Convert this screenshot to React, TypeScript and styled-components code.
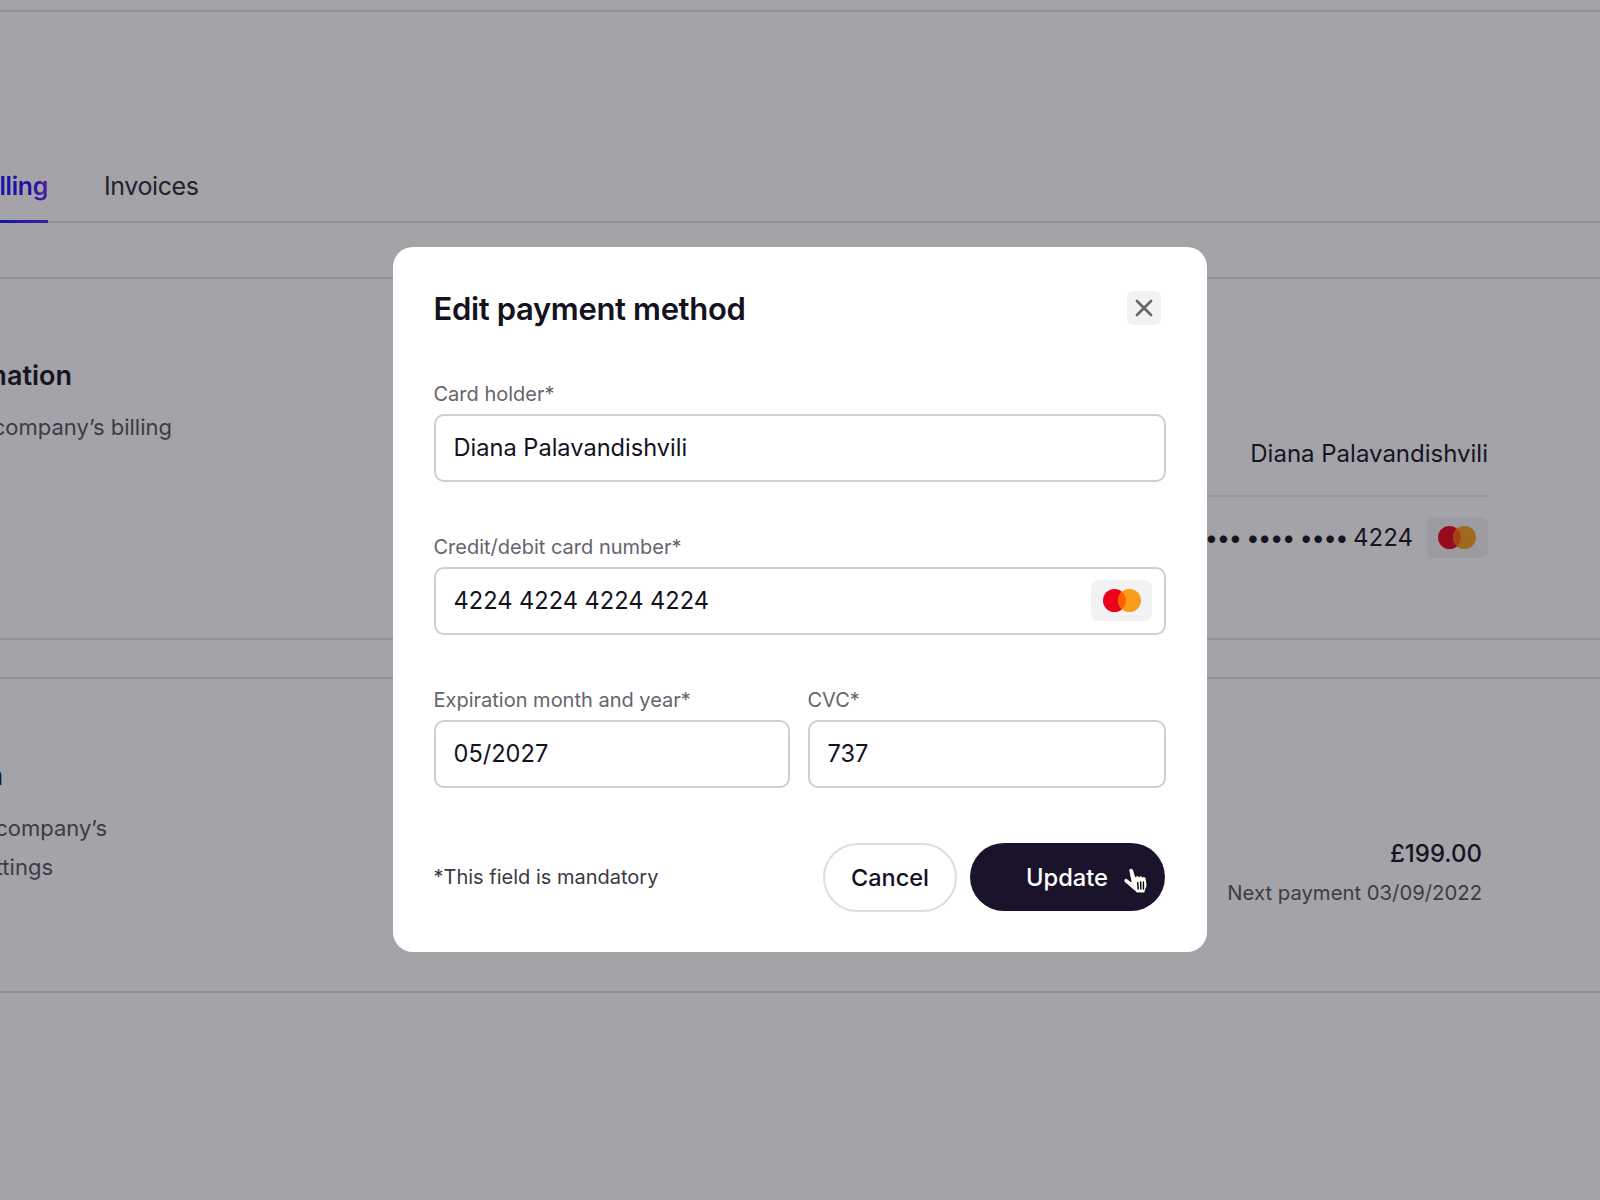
import styled, { createGlobalStyle } from "styled-components";

const GlobalStyle = createGlobalStyle`
  html, body {
    margin: 0;
    padding: 0;
  }

  body {
    font-family: Inter, "Liberation Sans", sans-serif;
    color: #14121f;
  }

  * {
    box-sizing: border-box;
  }
`;

const MastercardMark = () => (
  <svg width="38" height="23" viewBox="0 0 38 23" aria-hidden="true">
    <circle cx="11.5" cy="11.5" r="11.5" fill="#eb001b" />
    <circle cx="26.5" cy="11.5" r="11.5" fill="#f79e1b" />
    <path d="M19 2.8a11.5 11.5 0 0 1 0 17.4a11.5 11.5 0 0 1 0-17.4z" fill="#ff5f00" />
  </svg>
);

const HandCursor = () => (
  <svg width="25" height="27" viewBox="-1 0 25 27" aria-hidden="true">
    <path
      d="M4.8 3.2C4.700 1.200 8.800.8 9.400 3l2.200 7c.4-1.600 2.800-2 3.500-.1.6-1.400 2.800-1.500 3.400.3.900-1 3-.6 3.500 1.200l.9 5.600c.2 1.600-.2 3-1 4.400l-1 3.600c-.2.6-.6.9-1.200.9h-6.300c-.6 0-1-.3-1.300-.8L6.200 20 .6 15.200c-1.800-1.900.4-4.600 2.700-3.200l3.800 2.800z"
      fill="#fff"
      stroke="#000"
      strokeWidth="0.8"
      strokeLinejoin="round"
    />
    <path d="M13.700 15.500l.5 6.500M16.600 15l.3 7M19.400 15l.1 7" stroke="#000" strokeWidth="1.400" strokeLinecap="round" />
  </svg>
);

const CloseIcon = () => (
  <svg width="18" height="18" viewBox="0 0 18 18" aria-hidden="true">
    <path d="M2 2l14 14M16 2L2 16" stroke="#67666c" strokeWidth="2.800" strokeLinecap="round" />
  </svg>
);

export default function App() {
  return (
    <Page>
      <GlobalStyle />
      <TopRule />
      <TabBar>
        <ActiveTab $end={48}>
          <TabGradient>Billing</TabGradient>
        </ActiveTab>
        <Tab>Invoices</Tab>
      </TabBar>

      <Section>
        <SectionIntro>
          <IntroTitle $end={72}>Billing information</IntroTitle>
          <IntroLine $end={172}>Update your company’s billing</IntroLine>
        </SectionIntro>
        <DetailColumn>
          <NameRow>Diana Palavandishvili</NameRow>
          <CardRow>
            <CardDigits>
              <CardDots>•••• •••• •••• </CardDots>4224
            </CardDigits>
            <CardBadge>
              <MastercardMark />
            </CardBadge>
          </CardRow>
        </DetailColumn>
      </Section>

      <PlanSection>
        <PlanIntro>
          <IntroTitle $end={3}>Subscription</IntroTitle>
          <IntroLine $end={107}>Manage your company’s</IntroLine>
          <IntroLine $end={53}>settings</IntroLine>
        </PlanIntro>
        <PlanColumn>
          <Price>£199.00</Price>
          <NextPayment>Next payment 03/09/2022</NextPayment>
        </PlanColumn>
      </PlanSection>

      <Scrim>
        <Modal>
          <ModalHeader>
            <ModalTitle>Edit payment method</ModalTitle>
            <CloseButton type="button" aria-label="Close">
              <CloseIcon />
            </CloseButton>
          </ModalHeader>

          <Field>
            <FieldLabel>Card holder*</FieldLabel>
            <InputBox>
              <InputText readOnly value="Diana Palavandishvili" />
            </InputBox>
          </Field>

          <Field>
            <FieldLabel>Credit/debit card number*</FieldLabel>
            <InputBox>
              <InputText readOnly value="4224 4224 4224 4224" />
              <InputBadge>
                <MastercardMark />
              </InputBadge>
            </InputBox>
          </Field>

          <FieldPair>
            <Field>
              <FieldLabel>Expiration month and year*</FieldLabel>
              <InputBox>
                <InputText readOnly value="05/2027" />
              </InputBox>
            </Field>
            <Field>
              <FieldLabel>CVC*</FieldLabel>
              <InputBox>
                <InputText readOnly value="737" />
              </InputBox>
            </Field>
          </FieldPair>

          <ModalFooter>
            <Hint>*This field is mandatory</Hint>
            <CancelButton type="button">Cancel</CancelButton>
            <UpdateButton type="button">
              Update
              <CursorSlot>
                <HandCursor />
              </CursorSlot>
            </UpdateButton>
          </ModalFooter>
        </Modal>
      </Scrim>
    </Page>
  );
}

const Page = styled.div`
  position: relative;
  width: 1600px;
  height: 1200px;
  overflow: hidden;
  background: #fff;
  padding-top: 10px;
`;

const TopRule = styled.div`
  height: 2px;
  background: #e2e2e6;
`;

const TabBar = styled.div`
  display: flex;
  gap: 56px;
  height: 211px;
  align-items: flex-end;
  border-bottom: 2px solid #e2e2e6;
`;

const Tab = styled.div`
  position: relative;
  top: 2px;
  white-space: nowrap;
  padding-bottom: 17px;
  font-size: 25px;
  line-height: 34px;
  letter-spacing: -0.4px;
  color: #2a2833;
  border-bottom: 3px solid transparent;
`;

const ActiveTab = styled(Tab)<{ $end: number }>`
  display: flex;
  justify-content: flex-end;
  width: ${(p) => p.$end}px;
  font-weight: 600;
  border-image: linear-gradient(90deg, #1a10ff, #5a22f5) 1;
`;

const TabGradient = styled.span`
  background: linear-gradient(90deg, #1a10ff 70%, #6a24f5);
  -webkit-background-clip: text;
  background-clip: text;
  color: transparent;
`;

const Section = styled.section`
  display: flex;
  justify-content: space-between;
  height: 363px;
  margin-top: 54px;
  padding-right: 112px;
  border-top: 2px solid #e2e2e6;
  border-bottom: 2px solid #e2e2e6;
`;

const PlanSection = styled(Section)`
  height: 316px;
  margin-top: 37px;
  padding-right: 118px;
`;

const SectionIntro = styled.div`
  padding-top: 80px;
`;

const IntroTitle = styled.div<{ $end: number }>`
  display: flex;
  justify-content: flex-end;
  white-space: nowrap;
  width: ${(p) => p.$end}px;
  margin-bottom: 15px;
  font-size: 27px;
  line-height: 34px;
  font-weight: 600;
  color: #14121f;
`;

const PlanIntro = styled(SectionIntro)`
  padding-top: 80px;

  ${IntroTitle} {
    margin-bottom: 16px;
  }
`;

const IntroLine = styled.div<{ $end: number }>`
  display: flex;
  justify-content: flex-end;
  white-space: nowrap;
  width: ${(p) => p.$end}px;
  font-size: 22px;
  line-height: 39px;
  color: #55535c;
`;

const DetailColumn = styled.div`
  width: 620px;
  padding-top: 157px;
`;

const NameRow = styled.div`
  height: 61px;
  text-align: right;
  font-size: 24px;
  line-height: 36px;
  color: #14121f;
  border-bottom: 2px solid #ececef;
`;

const CardRow = styled.div`
  display: flex;
  justify-content: flex-end;
  align-items: center;
  gap: 13px;
  padding-top: 20px;
`;

const CardDigits = styled.div`
  font-size: 24px;
  line-height: 41px;
  color: #14121f;
`;

const CardDots = styled.span`
  letter-spacing: -0.85px;
  font-weight: 500;
`;

const CardBadge = styled.div`
  display: flex;
  align-items: center;
  justify-content: center;
  width: 62px;
  height: 41px;
  border-radius: 7px;
  background: #f2f2f3;
`;

const PlanColumn = styled.div`
  padding-top: 157px;
  text-align: right;
`;

const Price = styled.div`
  font-size: 24px;
  line-height: 36px;
  font-weight: 500;
  color: #14121f;
`;

const NextPayment = styled.div`
  margin-top: 3px;
  font-size: 20.300px;
  line-height: 36px;
  color: #55535c;
`;

const Scrim = styled.div`
  position: absolute;
  inset: 0;
  display: flex;
  justify-content: center;
  padding-top: 247px;
  background: rgba(27, 25, 37, 0.4);
`;

const Modal = styled.div`
  width: 814px;
  height: 705px;
  padding: 40px 41px 0 40.5px;
  border-radius: 20px;
  background: #fff;
`;

const ModalHeader = styled.div`
  display: flex;
  justify-content: space-between;
  align-items: center;
  height: 44px;
  margin-bottom: 45px;
  padding-right: 5px;
`;

const ModalTitle = styled.h2`
  margin: 0;
  font-size: 31px;
  line-height: 40px;
  letter-spacing: -0.35px;
  font-weight: 600;
  color: #14121f;
`;

const CloseButton = styled.button`
  position: relative;
  top: -1px;
  display: flex;
  align-items: center;
  justify-content: center;
  width: 34px;
  height: 34px;
  padding: 0;
  border: 0;
  border-radius: 6px;
  background: #f2f2f3;
`;

const Field = styled.div`
  min-width: 0;
  margin-bottom: 47.700px;
`;

const FieldLabel = styled.div`
  height: 37.500px;
  padding-top: 4px;
  font-size: 20px;
  line-height: 28px;
  color: #66646c;
`;

const InputBox = styled.div`
  display: flex;
  align-items: center;
  height: 68px;
  padding: 0 12px 0 18px;
  border: 2px solid #cfcfd2;
  border-radius: 10px;
  background: #fff;
`;

const InputText = styled.input`
  flex: 1;
  min-width: 0;
  padding: 0;
  border: 0;
  outline: 0;
  background: transparent;
  font-family: inherit;
  font-size: 23.600px;
  line-height: 32px;
  color: #14121f;
`;

const InputBadge = styled(CardBadge)`
  width: 61px;
  border-radius: 8px;
`;

const FieldPair = styled.div`
  display: grid;
  grid-template-columns: 356px minmax(0, 1fr);
  gap: 18px;
`;

const ModalFooter = styled.div`
  display: flex;
  align-items: center;
  margin-top: 7px;
`;

const Hint = styled.div`
  flex: 1;
  font-size: 20px;
  line-height: 28px;
  color: #3a3944;
`;

const CancelButton = styled.button`
  width: 134px;
  height: 69px;
  margin-right: 13px;
  padding: 0;
  border: 2px solid #dedee0;
  border-radius: 35px;
  background: #fff;
  font-family: inherit;
  font-size: 23.500px;
  font-weight: 500;
  color: #14121f;
`;

const UpdateButton = styled.button`
  position: relative;
  width: 195px;
  height: 68px;
  margin-right: 1px;
  padding: 0 0 0 56px;
  border: 0;
  border-radius: 34px;
  background: #1a132b;
  font-family: inherit;
  font-size: 23.700px;
  font-weight: 500;
  text-align: left;
  color: #fff;
`;

const CursorSlot = styled.span`
  position: absolute;
  left: 153px;
  top: 24px;
  display: flex;
`;
